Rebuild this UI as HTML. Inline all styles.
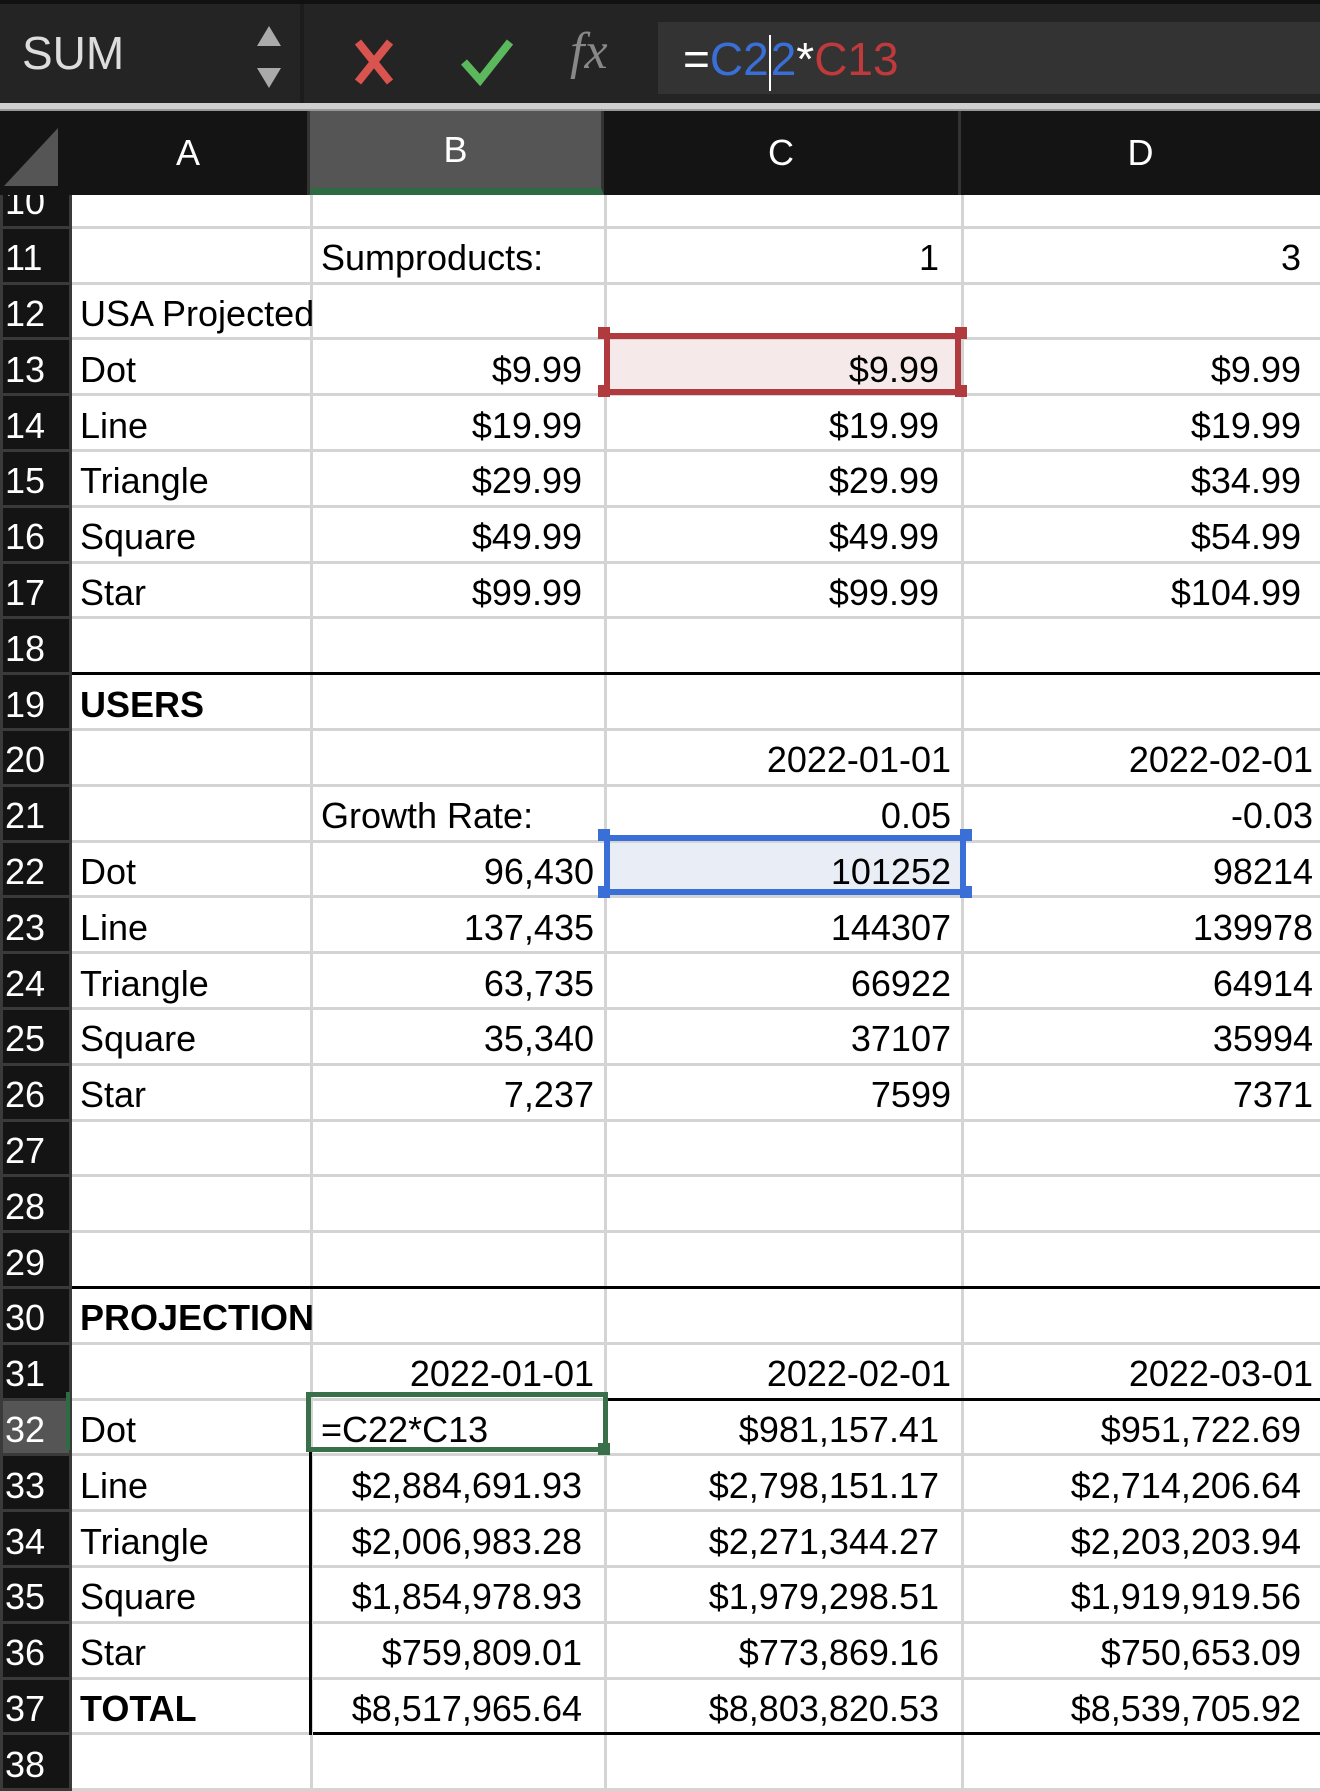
<!DOCTYPE html>
<html><head><meta charset="utf-8"><style>
*{margin:0;padding:0;box-sizing:border-box}
body{width:1320px;height:1748px;overflow:hidden;background:#fff;font-family:"Liberation Sans",sans-serif;position:relative}
.top{position:absolute;left:0;top:0;width:1320px;height:103px;background:#242424;border-top:4px solid #111;z-index:5}
.sep{position:absolute;left:0;top:103px;width:1320px;height:8px;background:#cfcfcf;border-bottom:2px solid #999;z-index:5}
.hdr{position:absolute;left:0;top:111px;width:1320px;height:84px;background:#141414;z-index:5}
.h{position:absolute;top:111px;height:84px;line-height:84px;text-align:center;color:#fff;font-size:36px;border-right:3px solid #333;z-index:6}
table{position:absolute;left:0;top:170px;width:1323px;border-collapse:collapse;table-layout:fixed}
td{height:55.8px;border:3px solid #d4d4d4;font-size:36px;color:#000;white-space:nowrap;overflow:visible;padding:6px 10px 0 8px;text-align:right;line-height:46px}
td.n{background:#141414;color:#fff;text-align:left;padding-left:2px;border-color:#3a3a3a}
td.l{text-align:left}
td.c{padding-right:22px}
b{font-weight:bold}
</style></head><body>
<div class="top">
 <div style="position:absolute;left:22px;top:22px;color:#ddd;font-size:46px">SUM</div>
 <div style="position:absolute;left:257px;top:22px;width:0;height:0;border-left:12px solid transparent;border-right:12px solid transparent;border-bottom:20px solid #aaa"></div>
 <div style="position:absolute;left:257px;top:64px;width:0;height:0;border-left:12px solid transparent;border-right:12px solid transparent;border-top:20px solid #aaa"></div>
 <div style="position:absolute;left:300px;top:0;width:4px;height:99px;background:#1c1c1c"></div>
 <svg style="position:absolute;left:350px;top:34px" width="50" height="48"><path d="M8 4 L40 44 M40 4 L8 44" stroke="#d9534f" stroke-width="8"/></svg>
 <svg style="position:absolute;left:458px;top:32px" width="58" height="50"><path d="M6 26 L22 44 L52 6" stroke="#5cb85c" stroke-width="8" fill="none"/></svg>
 <div style="position:absolute;left:570px;top:18px;color:#888;font-size:52px;font-style:italic;font-family:'Liberation Serif',serif">fx</div>
 <div style="position:absolute;left:658px;top:18px;width:662px;height:72px;background:#333"></div>
 <div style="position:absolute;left:683px;top:26px;font-size:46px;color:#fff;line-height:58px">=<span style="color:#3a6fd8">C2</span><span style="display:inline-block;width:2px;height:56px;background:#fff;vertical-align:middle"></span><span style="color:#3a6fd8">2</span>*<span style="color:#c0393b">C13</span></div>
</div>
<div class="sep"></div>
<div class="hdr"></div>
<div style="position:absolute;left:4px;top:128px;width:0;height:0;border-left:54px solid transparent;border-bottom:58px solid #555;z-index:6"></div>
<div class="h" style="left:69px;width:241px">A</div>
<div class="h" style="left:310px;width:294px;background:#555;border-bottom:7px solid #2e6b42;line-height:77px">B</div>
<div class="h" style="left:604px;width:357px">C</div>
<div class="h" style="left:961px;width:359px;border-right:0">D</div>
<table>
<colgroup><col style="width:69px"><col style="width:241px"><col style="width:294px"><col style="width:357px"><col style="width:362px"></colgroup>
<tr><td class="n">10</td><td></td><td></td><td></td><td></td></tr>
<tr><td class="n">11</td><td></td><td class="l">Sumproducts:</td><td class="c">1</td><td class="c">3</td></tr>
<tr><td class="n">12</td><td class="l">USA Projected</td><td></td><td></td><td></td></tr>
<tr><td class="n">13</td><td class="l">Dot</td><td class="c">$9.99</td><td class="c" style="background:#f5e9e9">$9.99</td><td class="c">$9.99</td></tr>
<tr><td class="n">14</td><td class="l">Line</td><td class="c">$19.99</td><td class="c">$19.99</td><td class="c">$19.99</td></tr>
<tr><td class="n">15</td><td class="l">Triangle</td><td class="c">$29.99</td><td class="c">$29.99</td><td class="c">$34.99</td></tr>
<tr><td class="n">16</td><td class="l">Square</td><td class="c">$49.99</td><td class="c">$49.99</td><td class="c">$54.99</td></tr>
<tr><td class="n">17</td><td class="l">Star</td><td class="c">$99.99</td><td class="c">$99.99</td><td class="c">$104.99</td></tr>
<tr><td class="n">18</td><td style="border-bottom:3px solid #000"></td><td style="border-bottom:3px solid #000"></td><td style="border-bottom:3px solid #000"></td><td style="border-bottom:3px solid #000"></td></tr>
<tr><td class="n">19</td><td class="l"><b>USERS</b></td><td></td><td></td><td></td></tr>
<tr><td class="n">20</td><td></td><td></td><td>2022-01-01</td><td>2022-02-01</td></tr>
<tr><td class="n">21</td><td></td><td class="l">Growth Rate:</td><td>0.05</td><td>-0.03</td></tr>
<tr><td class="n">22</td><td class="l">Dot</td><td>96,430</td><td style="background:#e9edf6">101252</td><td>98214</td></tr>
<tr><td class="n">23</td><td class="l">Line</td><td>137,435</td><td>144307</td><td>139978</td></tr>
<tr><td class="n">24</td><td class="l">Triangle</td><td>63,735</td><td>66922</td><td>64914</td></tr>
<tr><td class="n">25</td><td class="l">Square</td><td>35,340</td><td>37107</td><td>35994</td></tr>
<tr><td class="n">26</td><td class="l">Star</td><td>7,237</td><td>7599</td><td>7371</td></tr>
<tr><td class="n">27</td><td></td><td></td><td></td><td></td></tr>
<tr><td class="n">28</td><td></td><td></td><td></td><td></td></tr>
<tr><td class="n">29</td><td style="border-bottom:3px solid #000"></td><td style="border-bottom:3px solid #000"></td><td style="border-bottom:3px solid #000"></td><td style="border-bottom:3px solid #000"></td></tr>
<tr><td class="n">30</td><td class="l"><b>PROJECTION</b></td><td></td><td></td><td></td></tr>
<tr><td class="n">31</td><td></td><td>2022-01-01</td><td style="border-bottom:3px solid #000">2022-02-01</td><td style="border-bottom:3px solid #000">2022-03-01</td></tr>
<tr><td class="n" style="background:#555">32</td><td class="l">Dot</td><td class="l">=C22*C13</td><td class="c">$981,157.41</td><td class="c">$951,722.69</td></tr>
<tr><td class="n">33</td><td class="l">Line</td><td class="c">$2,884,691.93</td><td class="c">$2,798,151.17</td><td class="c">$2,714,206.64</td></tr>
<tr><td class="n">34</td><td class="l">Triangle</td><td class="c">$2,006,983.28</td><td class="c">$2,271,344.27</td><td class="c">$2,203,203.94</td></tr>
<tr><td class="n">35</td><td class="l">Square</td><td class="c">$1,854,978.93</td><td class="c">$1,979,298.51</td><td class="c">$1,919,919.56</td></tr>
<tr><td class="n">36</td><td class="l">Star</td><td class="c">$759,809.01</td><td class="c">$773,869.16</td><td class="c">$750,653.09</td></tr>
<tr><td class="n">37</td><td class="l"><b>TOTAL</b></td><td class="c" style="border-bottom:3px solid #000">$8,517,965.64</td><td class="c" style="border-bottom:3px solid #000">$8,803,820.53</td><td class="c" style="border-bottom:3px solid #000">$8,539,705.92</td></tr>
<tr><td class="n">38</td><td></td><td></td><td></td><td></td></tr>
</table>
<!-- black left border of projection box -->
<div style="position:absolute;left:309px;top:1450px;width:3px;height:285px;background:#000"></div>
<!-- red selection C13 -->
<div style="position:absolute;left:604px;top:333px;width:357px;height:62px;border:6px solid #b03a3e"></div>
<div style="position:absolute;left:598px;top:327px;width:12px;height:12px;background:#b03a3e"></div>
<div style="position:absolute;left:955px;top:327px;width:12px;height:12px;background:#b03a3e"></div>
<div style="position:absolute;left:598px;top:385px;width:12px;height:12px;background:#b03a3e"></div>
<div style="position:absolute;left:955px;top:385px;width:12px;height:12px;background:#b03a3e"></div>
<!-- blue selection C22 -->
<div style="position:absolute;left:604px;top:835px;width:362px;height:60px;border:6px solid #3a6fd8"></div>
<div style="position:absolute;left:598px;top:829px;width:12px;height:12px;background:#3a6fd8"></div>
<div style="position:absolute;left:960px;top:829px;width:12px;height:12px;background:#3a6fd8"></div>
<div style="position:absolute;left:598px;top:886px;width:12px;height:12px;background:#3a6fd8"></div>
<div style="position:absolute;left:960px;top:886px;width:12px;height:12px;background:#3a6fd8"></div>
<!-- green active B32 -->
<div style="position:absolute;left:306px;top:1392px;width:302px;height:60px;border:5px solid #3a7049"></div>
<div style="position:absolute;left:598px;top:1443px;width:12px;height:12px;background:#3a7049"></div>
<div style="position:absolute;left:66px;top:1392px;width:4px;height:58px;background:#2e6b42"></div>
</body></html>
